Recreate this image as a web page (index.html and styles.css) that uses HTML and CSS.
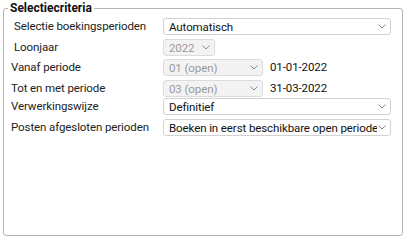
FILE: index.html
```html
<!DOCTYPE html>
<html lang="nl">
<head>
  <meta charset="UTF-8" />
  <meta name="viewport" content="width=device-width, initial-scale=1.0" />
  <title>Selectiecriteria</title>
  <link rel="stylesheet" href="styles.css">
</head>
<body>
  <fieldset class="criteria">
    <legend>Selectiecriteria</legend>
    <div class="rows">
      <div class="row">
        <label class="lbl indent">Selectie boekingsperioden</label>
        <div class="select wide"><span>Automatisch</span><svg class="chev" width="8" height="5" viewBox="0 0 8 5"><polyline points="0.5,0.5 4,4 7.5,0.5" /></svg></div>
      </div>
      <div class="row">
        <label class="lbl indent">Loonjaar</label>
        <div class="select year disabled"><span>2022</span><svg class="chev" width="8" height="5" viewBox="0 0 8 5"><polyline points="0.5,0.5 4,4 7.5,0.5" /></svg></div>
      </div>
      <div class="row">
        <label class="lbl">Vanaf periode</label>
        <div class="select period disabled"><span>01 (open)</span><svg class="chev" width="8" height="5" viewBox="0 0 8 5"><polyline points="0.5,0.5 4,4 7.5,0.5" /></svg></div>
        <span class="date">01-01-2022</span>
      </div>
      <div class="row">
        <label class="lbl">Tot en met periode</label>
        <div class="select period disabled"><span>03 (open)</span><svg class="chev" width="8" height="5" viewBox="0 0 8 5"><polyline points="0.5,0.5 4,4 7.5,0.5" /></svg></div>
        <span class="date">31-03-2022</span>
      </div>
      <div class="row">
        <label class="lbl">Verwerkingswijze</label>
        <div class="select wide"><span>Definitief</span><svg class="chev" width="8" height="5" viewBox="0 0 8 5"><polyline points="0.5,0.5 4,4 7.5,0.5" /></svg></div>
      </div>
      <div class="row">
        <label class="lbl">Posten afgesloten perioden</label>
        <div class="select wide"><span>Boeken in eerst beschikbare open periode</span><svg class="chev" width="8" height="5" viewBox="0 0 8 5"><polyline points="0.5,0.5 4,4 7.5,0.5" /></svg></div>
      </div>
    </div>
  </fieldset>
</body>
</html>
```

FILE: styles.css
```css
*, *::before, *::after { box-sizing: border-box; }
html, body { margin: 0; padding: 0; }
body {
  font-family: Roboto, "Liberation Sans", Arial, sans-serif;
  font-size: 11.5px;
  letter-spacing: -0.1px;
  color: #222;
  background-color: #fff;
}
.criteria {
  margin: 1px 0 0 3px;
  padding: 0 4px;
  width: 400px;
  height: 235px;
  border: 1px solid #b4b4b4;
  border-radius: 3px;
}
.criteria legend {
  padding: 0 2px;
  font-size: 12px;
  letter-spacing: 0;
  font-weight: bold;
  line-height: 14px;
  color: #111;
}
.rows {
  display: grid;
  grid-template-rows: 21px 20px 21px 18px 21px 17px;
  margin-top: 3px;
}
.row {
  display: flex;
  align-items: flex-start;
}
.lbl {
  width: 155px;
  flex: none;
  padding-left: 3px;
  line-height: 17px;
}
.lbl.indent { padding-left: 6px; }
.select {
  display: flex;
  align-items: center;
  height: 17px;
  padding: 0 4px 0 5px;
  border: 1px solid #d2d2d2;
  border-radius: 3px;
  background-color: #fff;
  color: #111;
  white-space: nowrap;
  overflow: hidden;
}
.select span {
  flex: 1;
  min-width: 0;
  overflow: hidden;
}
.select.wide { width: 228px; }
.select.year { width: 52px; }
.select.period { width: 100px; }
.select.disabled {
  background-color: #f3f3f3;
  border-color: #dcdcdc;
  color: #9a9a9a;
}
.chev {
  flex: none;
  margin-left: 1px;
  fill: none;
  stroke: #888;
  stroke-width: 1;
}
.date {
  margin-left: 7px;
  line-height: 17px;
  color: #111;
}
```
